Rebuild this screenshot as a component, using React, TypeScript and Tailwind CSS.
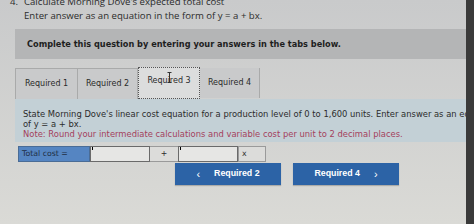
import React from "react";

export default function App() {
  const tab = "h-[30px] flex items-center justify-center text-[#2a2a2a]";
  const dv = { fontFamily: '"DejaVu Sans", Verdana, sans-serif' };
  return (
    <div className="w-[474px] h-[224px] overflow-hidden flex bg-gradient-to-b from-[#c9cacb] to-[#dadad6] text-[#2b2b2b]" style={{ fontFamily: '"Open Sans", "DejaVu Sans", sans-serif' }}>
      <div className="flex-1 min-w-0 overflow-hidden flex flex-col">
        {/* header */}
        <div className="pl-[10px] -mt-[4px] text-[9.6px] leading-[11px]">
          <div className="flex whitespace-nowrap">
            <span className="w-[14px]">4.</span>
            <span>Calculate Morning Dove's expected total cost</span>
          </div>
          <div className="pl-[14px] mt-[3px]">Enter answer as an equation in the form of y = a + bx.</div>
        </div>
        {/* gray bar */}
        <div className="mt-[8px] ml-[15px] h-[30px] bg-[#b4b5b6] flex items-center pl-[12px] text-[8.2px] font-bold text-[#1e1e1e]" style={dv}>
          Complete this question by entering your answers in the tabs below.
        </div>
        {/* tabs */}
        <div className="mt-[9px] ml-[15px] flex text-[8px]" style={dv}>
          <div className="flex border-t border-l border-[#a9aaaa]">
            <div className={`${tab} w-[62px] bg-[#c9cacb] border-r border-[#a9aaaa]`}>Required 1</div>
            <div className={`${tab} w-[60px] bg-[#c9cacb] border-r border-[#a9aaaa]`}>Required 2</div>
            <div className={`${tab} relative w-[62px] bg-[#dcdddd] border border-dotted border-[#555] -mt-[2px] h-[32px] items-start pt-[7px]`}>
              Required 3
              <svg className="absolute left-[28px] top-[4px]" width="5" height="11" viewBox="0 0 5 11">
                <path d="M0.5 0.5h4M2.5 0.5v10M0.5 10.5h4" stroke="#333" strokeWidth="1" fill="none" />
              </svg>
            </div>
            <div className={`${tab} w-[60px] bg-[#c9cacb] border-r border-[#a9aaaa] h-[28px] -mt-[1px]`}>Required 4</div>
          </div>
        </div>
        {/* content */}
        <div className="ml-[15px] bg-[#c3d0d6] pl-[8px] pt-[10px] pb-[3px] text-[8.4px] leading-[10px]" style={dv}>
          <div className="whitespace-nowrap">State Morning Dove's linear cost equation for a production level of 0 to 1,600 units. Enter answer as an equation in the form</div>
          <div>of y = a + bx.</div>
          <div className="text-[#a3405c] whitespace-nowrap">Note: Round your intermediate calculations and variable cost per unit to 2 decimal places.</div>
        </div>
        {/* input row */}
        <div className="mt-[4px] ml-[18px] flex h-[16px] text-[7.8px]" style={dv}>
          <div className="w-[72px] bg-[#5585c2] border border-[#4a6c96] flex items-center pl-[3px] text-[#1f2f45]">Total cost =</div>
          <div className="w-[60px] bg-[#e6e6e4] border border-[#6a6a6a] relative">
            <span className="absolute left-[1px] top-0 w-[1px] h-[3px] bg-black" />
          </div>
          <div className="w-[28px] bg-[#dcdcda] border-y border-[#9a9a9a] flex items-center justify-center">+</div>
          <div className="w-[60px] bg-[#e6e6e4] border border-[#6a6a6a] relative">
            <span className="absolute left-[1px] top-0 w-[1px] h-[3px] bg-black" />
          </div>
          <div className="w-[28px] bg-[#dcdcda] border border-[#9a9a9a] flex items-center pl-[3px]">x</div>
        </div>
        {/* buttons */}
        <div className="mt-[1px] ml-[175px] flex gap-[12px] text-[8.8px] font-bold text-white" style={{ fontFamily: '"Liberation Sans", Arial, sans-serif' }}>
          <div className="w-[106px] h-[22px] bg-[#2c63a6] flex items-center justify-center gap-[14px] shadow-[0_1px_1px_rgba(0,0,0,0.2)]">
            <span className="font-normal text-[11px]">&lsaquo;</span>
            <span>Required 2</span>
          </div>
          <div className="w-[106px] h-[22px] bg-[#2c63a6] flex items-center justify-center gap-[14px] shadow-[0_1px_1px_rgba(0,0,0,0.2)]">
            <span>Required 4</span>
            <span className="font-normal text-[11px]">&rsaquo;</span>
          </div>
        </div>
      </div>
      <div className="w-[8px] bg-[#3a3a3a]" />
    </div>
  );
}
